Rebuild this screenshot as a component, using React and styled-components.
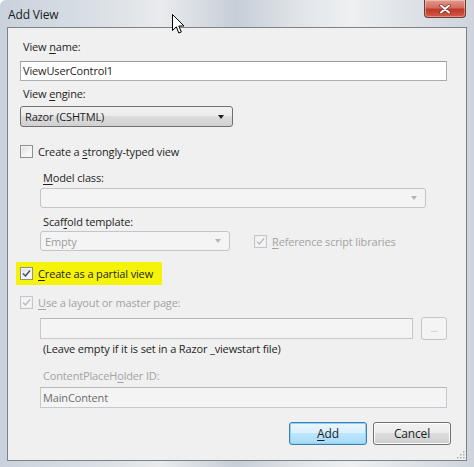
import React from 'react';
import styled, { createGlobalStyle, css } from 'styled-components';

const GlobalStyle = createGlobalStyle`
  html, body {
    margin: 0;
    padding: 0;
    background: #ffffff;
  }
  body {
    font-family: "Open Sans", "Noto Sans", "DejaVu Sans", sans-serif;
    font-size: 11px;
    letter-spacing: -0.15px;
    color: #1e1e1e;
  }
`;

// Window chrome

const Window = styled.div`
  position: relative;
  width: 474px;
  height: 467px;
  box-sizing: border-box;
  padding: 0 7px 6px 7px;
  display: flex;
  flex-direction: column;
  background: linear-gradient(
    90deg,
    #c9d2dc 0%,
    #d9dfe5 20%,
    #e9ebed 34%,
    #c6ced7 50%,
    #dfe3e8 62%,
    #eef0f2 74%,
    #cdd4dc 100%
  );
  border-top-left-radius: 6px;
  overflow: hidden;
`;

const TitleBar = styled.div`
  height: 27px;
  display: flex;
  align-items: flex-start;
  justify-content: space-between;
`;

const Title = styled.div`
  padding-top: 6px;
  padding-left: 1px;
  font-size: 12px;
  color: #1b1b1b;
`;

const CloseButton = styled.div`
  width: 42px;
  height: 18px;
  margin-right: 1px;
  box-sizing: border-box;
  border: 1px solid #6e3b36;
  border-top: none;
  border-radius: 0 0 4px 4px;
  background: linear-gradient(180deg, #e29a8c 0%, #d46d5e 45%, #c0392a 55%, #d25a48 100%);
  display: flex;
  align-items: center;
  justify-content: center;
  box-shadow: inset 0 0 0 1px rgba(255, 255, 255, 0.35);
`;

const Cursor = styled.svg`
  position: absolute;
  left: 172px;
  top: 14px;
`;

const Client = styled.div`
  position: relative;
  flex: 1;
  background: #f0f0f0;
  border: 1px solid #7c8288;
  box-sizing: border-box;
  padding: 11px 19px 0 12px;
  display: flex;
  flex-direction: column;
`;

// Form parts

const Label = styled.div`
  height: 16px;
  line-height: 16px;
  padding-left: ${({ $indent }) => ($indent ? 23 : 3)}px;
  margin-top: ${({ $mt }) => $mt || 0}px;
  color: ${({ $disabled }) => ($disabled ? '#a3a3a3' : '#1e1e1e')};
  white-space: nowrap;
`;

const U = styled.span`
  text-decoration: underline;
  text-underline-offset: 2px;
`;

const TextBox = styled.div`
  height: ${({ $h }) => $h || 20}px;
  width: ${({ $w }) => ($w ? `${$w}px` : 'auto')};
  margin-top: ${({ $mt }) => $mt || 0}px;
  margin-left: ${({ $indent }) => ($indent ? 20 : 0)}px;
  box-sizing: border-box;
  border: 1px solid ${({ $disabled }) => ($disabled ? '#c5c8cc' : '#abadb3')};
  border-top-color: ${({ $disabled }) => ($disabled ? '#b5b8bc' : '#9a9ca2')};
  background: ${({ $disabled }) => ($disabled ? '#f4f4f4' : '#ffffff')};
  color: ${({ $disabled }) => ($disabled ? '#6d6d6d' : '#1e1e1e')};
  padding-left: 2px;
  line-height: ${({ $h }) => ($h || 20) - 2}px;
  white-space: nowrap;
`;

const Combo = styled.div`
  width: ${({ $w }) => $w}px;
  height: ${({ $h }) => $h || 20}px;
  margin-top: ${({ $mt }) => $mt || 0}px;
  margin-left: ${({ $indent }) => ($indent ? 20 : 0)}px;
  box-sizing: border-box;
  border-radius: 3px;
  padding: 0 8px 0 4px;
  display: flex;
  align-items: center;
  justify-content: space-between;
  ${({ $disabled }) =>
    $disabled
      ? css`
          border: 1px solid #c2c5c9;
          background: #f4f4f4;
          color: #9c9c9c;
        `
      : css`
          border: 1px solid #707070;
          background: linear-gradient(180deg, #f2f2f2 0%, #ebebeb 49%, #dddddd 50%, #cfcfcf 100%);
          color: #1e1e1e;
        `}
`;

const Arrow = styled.span`
  width: 0;
  height: 0;
  border-left: 3.5px solid transparent;
  border-right: 3.5px solid transparent;
  border-top: 4px solid ${({ $disabled }) => ($disabled ? '#b4b4b4' : '#1e1e1e')};
`;

const CheckRow = styled.div`
  display: flex;
  align-items: center;
  gap: 5px;
  height: 16px;
  margin-top: ${({ $mt }) => $mt || 0}px;
  color: ${({ $disabled }) => ($disabled ? '#a3a3a3' : '#1e1e1e')};
  white-space: nowrap;
`;

const Box = styled.span`
  width: 13px;
  height: 13px;
  box-sizing: border-box;
  border: 1px solid ${({ $disabled }) => ($disabled ? '#c3c6ca' : '#8e8f8f')};
  background: ${({ $disabled }) =>
    $disabled ? '#f4f4f4' : 'linear-gradient(135deg, #dcdcdc 0%, #f4f4f4 60%, #ffffff 100%)'};
  box-shadow: inset 0 0 0 1px ${({ $disabled }) => ($disabled ? '#eeeeee' : '#f4f4f4')};
  display: flex;
  align-items: center;
  justify-content: center;
  flex-shrink: 0;
`;

const Highlight = styled.div`
  margin-top: 11px;
  margin-left: -4px;
  width: 146px;
  height: 23px;
  box-sizing: border-box;
  padding: 0 0 0 4px;
  background: #f6f30a;
  display: flex;
  align-items: center;
`;

const Row = styled.div`
  display: flex;
  align-items: center;
  gap: ${({ $gap }) => $gap || 0}px;
  margin-top: ${({ $mt }) => $mt || 0}px;
  margin-left: ${({ $indent }) => ($indent ? 20 : 0)}px;
`;

const SmallButton = styled.div`
  width: 26px;
  height: 23px;
  box-sizing: border-box;
  border: 1px solid #c2c5c9;
  border-radius: 3px;
  background: #f4f4f4;
  color: #a8a8a8;
  display: flex;
  align-items: center;
  justify-content: center;
  font-size: 9px;
`;

const Footer = styled.div`
  display: flex;
  justify-content: flex-end;
  gap: 6px;
  margin-top: 14px;
  margin-right: -4px;
`;

const Button = styled.div`
  width: 78px;
  height: 23px;
  box-sizing: border-box;
  border-radius: 3px;
  border: 1px solid ${({ $default }) => ($default ? '#3c7fb1' : '#707070')};
  background: ${({ $default }) =>
    $default
      ? 'linear-gradient(180deg, #eaf6fd 0%, #d9f0fc 49%, #bee6fd 50%, #a7d9f5 100%)'
      : 'linear-gradient(180deg, #f2f2f2 0%, #ebebeb 49%, #dddddd 50%, #cfcfcf 100%)'};
  box-shadow: ${({ $default }) => ($default ? 'inset 0 0 0 1px #8fd2f5' : 'inset 0 0 0 1px #fcfcfc')};
  display: flex;
  align-items: center;
  justify-content: center;
  font-size: 12px;
  color: #1e1e1e;
`;

const Grip = styled.svg`
  position: absolute;
  right: 1px;
  bottom: 1px;
`;

const Check = ({ disabled }) => (
  <svg width="9" height="9" viewBox="0 0 9 9">
    <path
      d="M1 4.5 L3.5 7 L8 1.5"
      fill="none"
      stroke={disabled ? '#b9bcc0' : '#3b4a5c'}
      strokeWidth="1.4"
    />
  </svg>
);

const App = () => (
  <>
    <GlobalStyle />
    <Window>
      <TitleBar>
        <Title>Add View</Title>
        <CloseButton>
          <svg width="12" height="10" viewBox="0 0 12 10">
            <path d="M2 1.5 L10 8.5 M10 1.5 L2 8.5" stroke="#7a2a22" strokeWidth="3.4" strokeLinecap="round" />
            <path d="M2 1.5 L10 8.5 M10 1.5 L2 8.5" stroke="#ffffff" strokeWidth="2" strokeLinecap="round" />
          </svg>
        </CloseButton>
      </TitleBar>
      <Client>
        <Label>
          View <U>n</U>ame:
        </Label>
        <TextBox $mt={6}>ViewUserControl1</TextBox>
        <Label $mt={5}>
          View <U>e</U>ngine:
        </Label>
        <Combo $w={213} $h={21} $mt={4}>
          <span>Razor (CSHTML)</span>
          <Arrow />
        </Combo>

        <CheckRow $mt={16}>
          <Box />
          <span>
            Create a <U>s</U>trongly-typed view
          </span>
        </CheckRow>
        <Label $indent $mt={11}>
          <U>M</U>odel class:
        </Label>
        <Combo $indent $disabled $w={386} $mt={2}>
          <span>&nbsp;</span>
          <Arrow $disabled />
        </Combo>
        <Label $indent $mt={6}>
          Scaf<U>f</U>old template:
        </Label>
        <Row $indent $mt={1} $gap={24}>
          <Combo $disabled $w={190}>
            <span>Empty</span>
            <Arrow $disabled />
          </Combo>
          <CheckRow $disabled>
            <Box $disabled>
              <Check disabled />
            </Box>
            <span>
              <U>R</U>eference script libraries
            </span>
          </CheckRow>
        </Row>

        <Highlight>
          <CheckRow>
            <Box>
              <Check />
            </Box>
            <span>
              <U>C</U>reate as a partial view
            </span>
          </CheckRow>
        </Highlight>
        <CheckRow $disabled $mt={9}>
          <Box $disabled>
            <Check disabled />
          </Box>
          <span>
            <U>U</U>se a layout or master page:
          </span>
        </CheckRow>
        <Row $indent $mt={7} $gap={8}>
          <TextBox $disabled $w={373} $h={21} />
          <SmallButton>...</SmallButton>
        </Row>
        <Label $indent $mt={1}>
          (Leave empty if it is set in a Razor _viewstart file)
        </Label>
        <Label $indent $disabled $mt={11}>
          ContentPlaceH<U>o</U>lder ID:
        </Label>
        <TextBox $indent $disabled $h={21} $mt={3}>
          MainContent
        </TextBox>
        <Footer>
          <Button $default>
            <span>
              <U>A</U>dd
            </span>
          </Button>
          <Button>Cancel</Button>
        </Footer>
        <Grip width="10" height="10" viewBox="0 0 10 10">
          {[
            [8, 2],
            [8, 5],
            [5, 5],
            [8, 8],
            [5, 8],
            [2, 8],
          ].map(([x, y]) => (
            <rect key={`${x}-${y}`} x={x} y={y} width="1.5" height="1.5" fill="#a8acb0" />
          ))}
        </Grip>
      </Client>
      <Cursor width="14" height="21" viewBox="0 0 14 21">
        <path
          d="M0.5 0.5 L0.5 16.5 L4.3 12.8 L6.8 19 L9.3 18 L6.8 12 L12 12 Z"
          fill="#ffffff"
          stroke="#000000"
          strokeWidth="1"
          strokeLinejoin="miter"
        />
      </Cursor>
    </Window>
  </>
);

export default App;
